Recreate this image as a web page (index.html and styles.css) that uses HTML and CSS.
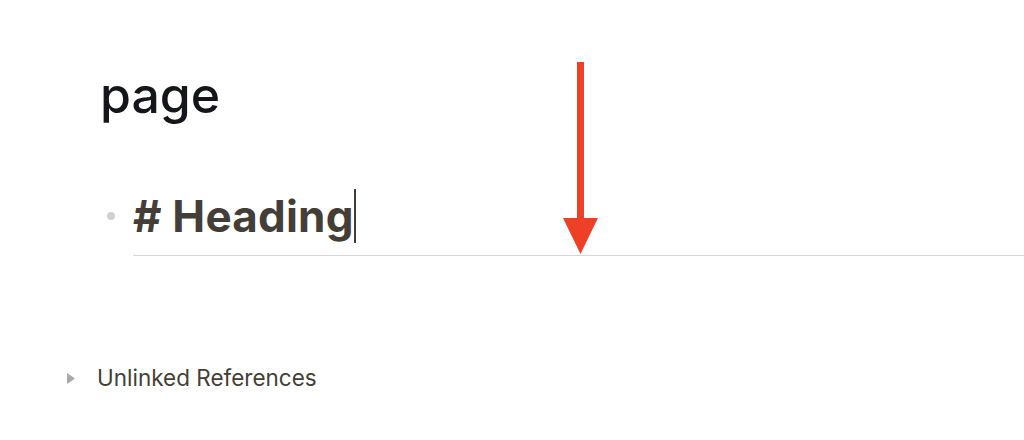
FILE: index.html
```html
<!DOCTYPE html>
<html>
<head>
<meta charset="utf-8">
<link rel="stylesheet" href="styles.css">
</head>
<body>
<div class="page">
  <h1 class="title">page</h1>
  <div class="block">
    <span class="bullet"></span>
    <div class="editor"><span class="heading"># Heading</span><span class="caret"></span></div>
  </div>
  <div class="refs">
    <svg class="toggle" width="8" height="11" viewBox="0 0 8 11"><path d="M0 0 L8 5.5 L0 11 Z" fill="#a8a8a8"/></svg>
    <span class="refs-label">Unlinked References</span>
  </div>
  <svg class="arrow" width="40" height="196" viewBox="0 0 40 196">
    <rect x="15" y="0" width="7" height="160" fill="#ee4027"/>
    <path d="M1 156 L36 156 L18.5 192 Z" fill="#ee4027"/>
  </svg>
</div>
</body>
</html>
```
FILE: styles.css
```css
html, body {
  margin: 0;
  padding: 0;
  background: #fff;
}
body {
  width: 1024px;
  height: 440px;
  overflow: hidden;
  font-family: Inter, "Noto Sans", sans-serif;
}
.page {
  position: relative;
  height: 440px;
  padding-top: 65px;
  box-sizing: border-box;
}
.title {
  margin: 0 0 0 100px;
  font-size: 50px;
  font-weight: 500;
  line-height: 60px;
  color: #15161a;
}
.block {
  display: flex;
  align-items: flex-start;
  margin-top: 64px;
  margin-left: 107px;
}
.bullet {
  flex: none;
  width: 8px;
  height: 8px;
  border-radius: 50%;
  background: #d2d2d2;
  margin-top: 23px;
  margin-right: 18px;
}
.editor {
  flex: 1;
  display: flex;
  align-items: flex-start;
  padding-bottom: 12px;
  border-bottom: 1px solid #d6d6d6;
}
.heading {
  font-size: 44px;
  font-weight: 700;
  color: #433f38;
  line-height: 54px;
  letter-spacing: 0.2px;
}
.caret {
  width: 2px;
  height: 54px;
  background: #433f38;
}
.refs {
  display: flex;
  align-items: center;
  margin-top: 107px;
  margin-left: 67px;
  height: 30px;
}
.toggle {
  margin-right: 22px;
}
.refs-label {
  font-size: 22.5px;
  line-height: 30px;
  color: #433f38;
}
.arrow {
  position: absolute;
  left: 562px;
  top: 62px;
}
```
